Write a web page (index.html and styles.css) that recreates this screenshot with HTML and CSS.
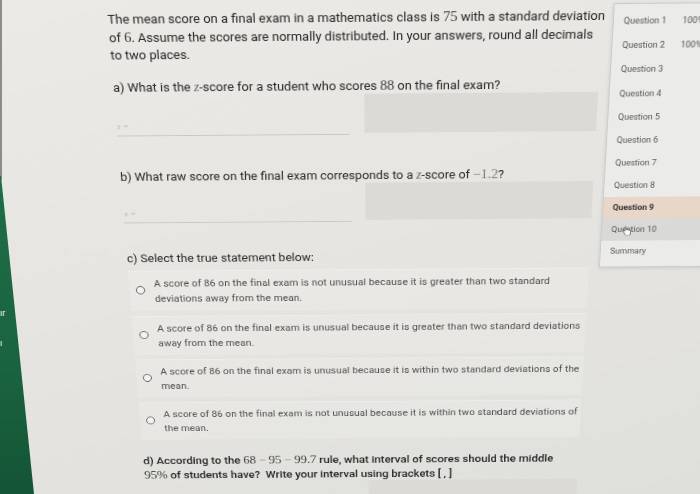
FILE: index.html
```html
<!DOCTYPE html>
<html lang="en">
<head>
<meta charset="utf-8">
<title>Question 9</title>
<link rel="stylesheet" href="styles.css">
</head>
<body>
<div class="stage">
  <div class="page">
    <main class="content">
      <p class="intro">The mean score on a final exam in a mathematics class is <span class="m">75</span> with a standard deviation<br>of <span class="m">6</span>. Assume the scores are normally distributed. In your answers, round all decimals<br>to two places.</p>

      <section class="part part-a">
        <p class="q">a) What is the <i class="mv">z</i>-score for a student who scores <span class="m">88</span> on the final exam?</p>
        <div class="answer-row">
          <div class="field"><span class="ph">z =</span></div>
          <div class="feedback"></div>
        </div>
      </section>

      <section class="part part-b">
        <p class="q">b) What raw score on the final exam corresponds to a <i class="mv">z</i>-score of <span class="m light">−1.2</span>?</p>
        <div class="answer-row">
          <div class="field"><span class="ph">x =</span></div>
          <div class="feedback"></div>
        </div>
      </section>

      <section class="part part-c">
        <p class="q">c) Select the true statement below:</p>
        <div class="options">
          <div class="option"><span class="radio"></span><span class="opt-text">A score of 86 on the final exam is not unusual because it is greater than two standard<br>deviations away from the mean.</span></div>
          <div class="option"><span class="radio"></span><span class="opt-text">A score of 86 on the final exam is unusual because it is greater than two standard deviations<br>away from the mean.</span></div>
          <div class="option"><span class="radio"></span><span class="opt-text">A score of 86 on the final exam is unusual because it is within two standard deviations of the<br>mean.</span></div>
          <div class="option"><span class="radio"></span><span class="opt-text">A score of 86 on the final exam is not unusual because it is within two standard deviations of<br>the mean.</span></div>
        </div>
      </section>

      <section class="part part-d">
        <p class="qd">d) According to the <span class="m">68</span> <span class="m light">−</span> <span class="m">95</span> <span class="m light">−</span> <span class="m">99.7</span> rule, what interval of scores should the middle<br><span class="m">95%</span> of students have? &nbsp;Write your interval using brackets [ , ]</p>
        <div class="feedback low"></div>
      </section>
    </main>

    <aside class="nav">
      <div class="nav-item"><span class="label">Question 1</span><span class="score">100%</span></div>
      <div class="nav-item"><span class="label">Question 2</span><span class="score">100%</span></div>
      <div class="nav-item"><span class="label">Question 3</span></div>
      <div class="nav-item"><span class="label">Question 4</span></div>
      <div class="nav-item"><span class="label">Question 5</span></div>
      <div class="nav-item"><span class="label">Question 6</span></div>
      <div class="nav-item"><span class="label">Question 7</span></div>
      <div class="nav-item"><span class="label">Question 8</span></div>
      <div class="nav-item current"><span class="label">Question 9</span></div>
      <div class="nav-item hover"><span class="label">Question 10</span>
        <svg class="cursor" viewBox="0 0 16 20" width="9" height="11"><path d="M5 1.5c.8 0 1.5.7 1.5 1.5v6l.5-.1V8c0-.8.7-1.4 1.5-1.4S10 7.2 10 8v.6c.2-.6.8-1 1.4-1 .8 0 1.4.6 1.4 1.4v1c.2-.5.7-.8 1.3-.8.8 0 1.4.6 1.4 1.4v4c0 2.8-2.2 5-5 5H9c-1.8 0-3.4-.9-4.3-2.4L1.6 12c-.5-.7-.3-1.6.4-2 .6-.4 1.4-.3 1.9.3l-.4.7V3c0-.8.7-1.5 1.5-1.5z" fill="#fafafa" stroke="#333" stroke-width="1.2" stroke-linejoin="round"/></svg>
      </div>
      <div class="nav-item"><span class="label">Summary</span></div>
    </aside>
  </div>

  <div class="edge-line"></div>
  <div class="edge-green"><span class="edge-t1">ır</span><span class="edge-t2">ı</span></div>
</div>
</body>
</html>
```

FILE: styles.css
```css
html, body {
  margin: 0;
  padding: 0;
  width: 700px;
  height: 494px;
  overflow: hidden;
}

.stage {
  position: relative;
  width: 700px;
  height: 494px;
  overflow: hidden;
  background: linear-gradient(165deg, #eceae6 0%, #e6e5e1 45%, #dfdfdb 100%);
  font-family: Roboto, "Noto Sans", sans-serif;
}

.page {
  display: flex;
  align-items: flex-start;
  width: 900px;
  height: 600px;
  padding-left: 106px;
  box-sizing: border-box;
  transform-origin: 376px 0;
  transform: perspective(520px) rotateX(-8deg) rotate(-0.45deg);
}

.content {
  flex: none;
  width: 497px;
  padding-top: 9px;
  color: #272727;
  font-size: 13px;
}

.intro {
  margin: 0;
  line-height: 18.5px;
  white-space: nowrap;
}

.m {
  font-family: "Liberation Serif", "DejaVu Serif", serif;
  font-size: 14.5px;
  line-height: 10px;
  color: #3a3a3a;
}

.m.light {
  color: #7a7a7a;
}

.mv {
  font-family: "Liberation Serif", "DejaVu Serif", serif;
  font-size: 14px;
  line-height: 10px;
  color: #6a6a6a;
}

.q {
  margin: 0;
  line-height: 16px;
  white-space: nowrap;
}

.part-a { margin-top: 16.5px; }
.part-b { margin-top: 36.5px; }
.part-c { margin-top: 33px; }
.part-d { margin-top: 18px; }

.answer-row {
  display: flex;
  align-items: flex-start;
  gap: 15px;
}

.field {
  flex: none;
  width: 242px;
  height: 44px;
  box-sizing: border-box;
  border-bottom: 1px solid #c8c8c5;
  display: flex;
  align-items: flex-end;
  padding-bottom: 4px;
}

.ph {
  font-family: "Liberation Serif", "DejaVu Serif", serif;
  font-style: italic;
  font-size: 9px;
  line-height: 11px;
  color: #b8b8b4;
  margin-left: 1px;
}

.feedback {
  flex: none;
  width: 240px;
  height: 42px;
  background: #dbdad7;
}

.feedback.low {
  margin-top: -2px;
  margin-left: 257px;
  height: 40px;
}

.options {
  margin-top: 6.5px;
  display: flex;
  flex-direction: column;
  gap: 5.5px;
}

.option {
  height: 48px;
  box-sizing: border-box;
  display: flex;
  align-items: flex-start;
  gap: 10px;
  padding-left: 7px;
  background: rgba(255, 255, 255, 0.16);
  box-shadow: inset 0 1px 0 rgba(255, 255, 255, 0.25);
}

.radio {
  flex: none;
  width: 10px;
  height: 10px;
  box-sizing: border-box;
  border: 1.6px solid #555;
  border-radius: 50%;
  background: #f4f4f2;
  margin-top: 18px;
}

.opt-text {
  padding-top: 7px;
  font-size: 11px;
  line-height: 18px;
  letter-spacing: 0.15px;
  color: #4a4a4a;
  white-space: nowrap;
}

.qd {
  margin: 0;
  font-weight: 500;
  line-height: 19.5px;
  white-space: nowrap;
  color: #262626;
}

.nav {
  flex: none;
  position: relative;
  margin-top: 5px;
  margin-left: 11px;
  width: 130px;
  padding: 4.75px 0 5px;
  background: #ebebe9;
  border: 1px solid #cbcbc8;
  box-shadow: 0 1px 4px rgba(0, 0, 0, 0.12);
  font-size: 9px;
  color: #555;
}

.nav-item {
  position: relative;
  height: 25.1px;
  display: flex;
  align-items: center;
  padding-left: 10px;
}

.label {
  width: 59px;
}

.nav-item.current {
  background: #e8d7c9;
  color: #333;
  font-weight: 700;
}

.nav-item.hover {
  background: #d9d9d7;
}

.cursor {
  position: absolute;
  left: 22px;
  top: 8px;
}

.edge-line {
  position: absolute;
  left: 0;
  top: 0;
  width: 2px;
  height: 180px;
  background: #8e8c89;
}

.edge-green {
  position: absolute;
  left: 0;
  top: 176px;
  width: 36px;
  height: 318px;
  background: linear-gradient(180deg, #1f6e47 0%, #1a6340 60%, #145436 100%);
  clip-path: polygon(0 0, 1px 0, 34px 318px, 0 318px);
}

.edge-t1, .edge-t2 {
  position: absolute;
  left: 0;
  font-family: Roboto, sans-serif;
  font-size: 9px;
  color: #eef3ef;
}

.edge-t1 { top: 132px; }
.edge-t2 { top: 162px; }
```
